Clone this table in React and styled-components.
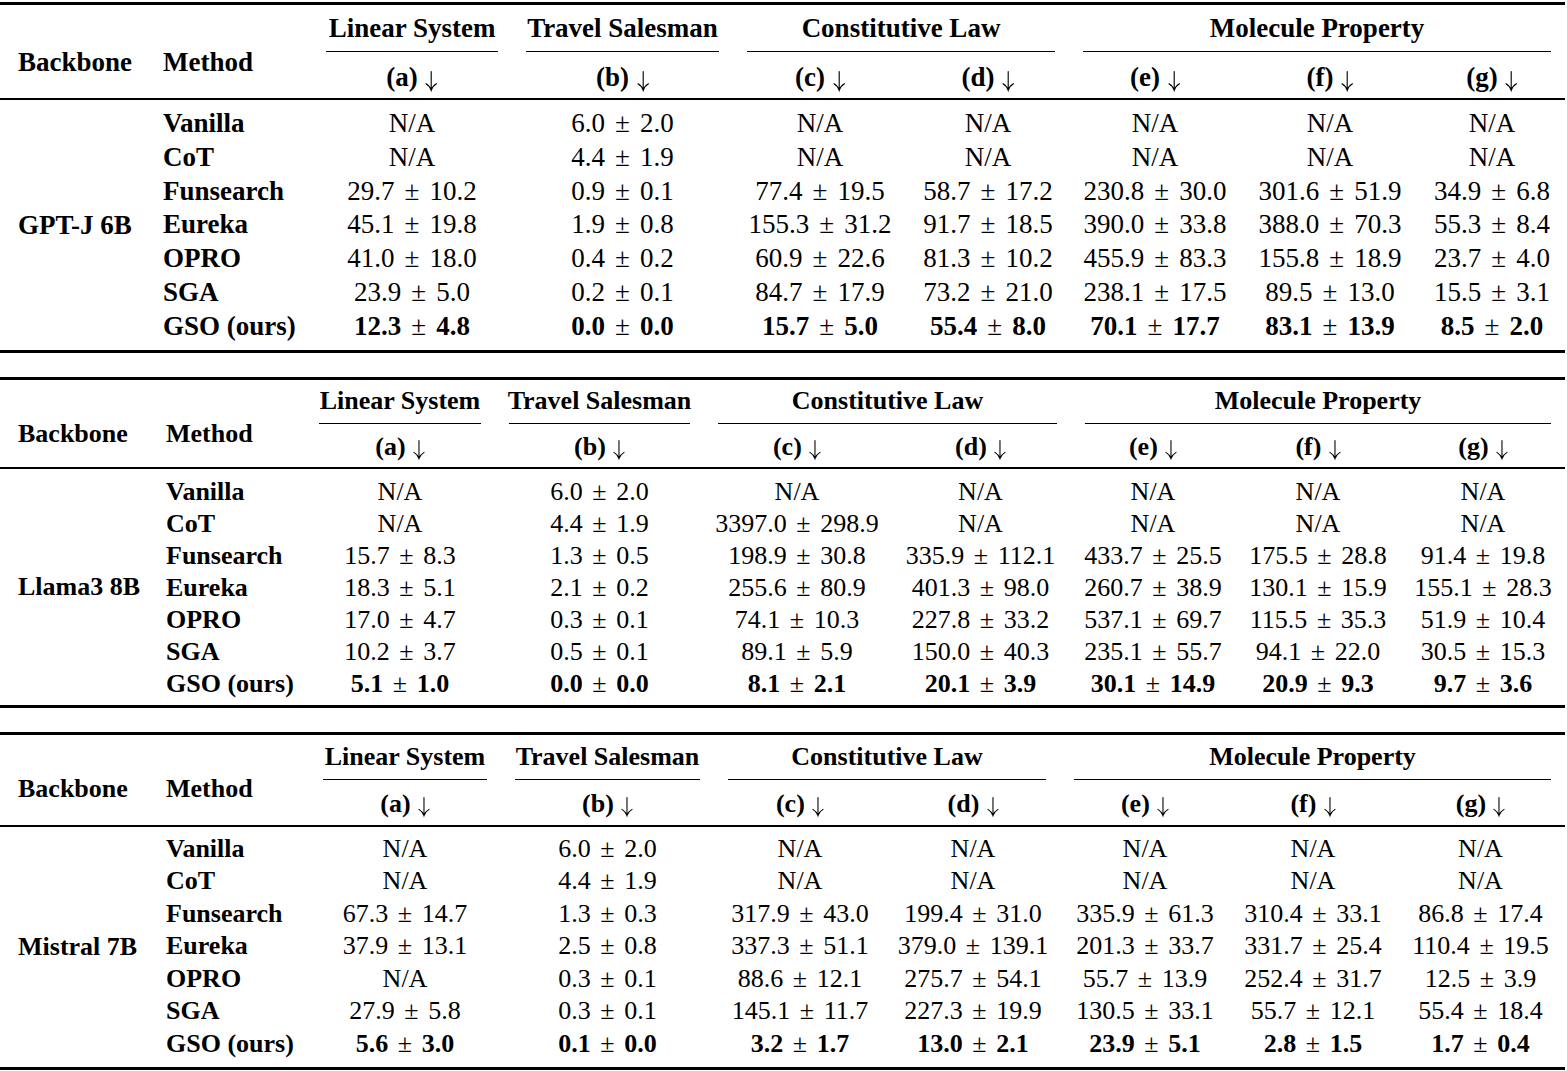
import React from "react";
import styled, { createGlobalStyle } from "styled-components";

const GlobalStyle = createGlobalStyle`
  html, body { margin: 0; padding: 0; background: #fff; }
  body { font-family: "Liberation Serif", "Times New Roman", serif; color: #000; }
`;

const Page = styled.div`
  width: 1565px;
  font-family: "Liberation Serif", "Times New Roman", serif;
  color: #000;
`;

const Table = styled.table`
  width: 1565px;
  table-layout: fixed;
  border-collapse: collapse;
  border-spacing: 0;
  margin-top: ${(p) => p.$mt}px;
  font-size: ${(p) => p.$fs}px;
  border-top: 3px solid #000;
  border-bottom: 3px solid #000;
`;

const Col = styled.col`
  width: ${(p) => p.$w}px;
`;

const Head = styled.thead`
  border-bottom: 2px solid #000;
`;

const CornerHead = styled.th`
  text-align: left;
  vertical-align: middle;
  font-weight: bold;
  white-space: nowrap;
  padding: ${(p) => p.$pt}px 0 0 ${(p) => p.$pl}px;
  line-height: 1.2;
`;

const GroupHead = styled.th`
  padding: 0 14px;
  vertical-align: bottom;
`;

const GroupLabel = styled.div`
  box-sizing: border-box;
  height: ${(p) => p.$h}px;
  display: flex;
  align-items: center;
  justify-content: center;
  border-bottom: 1px solid #000;
  white-space: nowrap;
  font-weight: bold;
`;

const SubHead = styled.th`
  text-align: center;
  vertical-align: middle;
  white-space: nowrap;
  font-weight: bold;
  padding: ${(p) => p.$pt}px 0 0;
  line-height: ${(p) => p.$h - p.$pt}px;
`;

const ArrowSvg = styled.svg`
  display: inline-block;
  width: 0.46em;
  height: 0.72em;
  margin-left: 0.28em;
  vertical-align: -0.16em;
  overflow: visible;
`;

const DataRow = styled.tr`
  & > td {
    padding-top: ${(p) => p.$pt}px;
    padding-bottom: ${(p) => p.$pb}px;
  }
`;

const BackboneCell = styled.td`
  text-align: left;
  vertical-align: middle;
  font-weight: bold;
  white-space: nowrap;
  line-height: 1.2;
  && {
    padding: 0 0 0 18px;
  }
`;

const MethodCell = styled.td`
  text-align: left;
  font-weight: bold;
  white-space: nowrap;
  padding: 0 0 0 15px;
  line-height: ${(p) => p.$lh}px;
`;

const Val = styled.td`
  text-align: center;
  white-space: nowrap;
  padding: 0;
  line-height: ${(p) => p.$lh}px;
  font-weight: ${(p) => (p.$bold ? "bold" : "normal")};
`;

const Pm = styled.span`
  font-weight: normal;
  margin: 0 0.12em;
`;

const METHODS = ["Vanilla", "CoT", "Funsearch", "Eureka", "OPRO", "SGA", "GSO (ours)"];
const SUBS = ["a", "b", "c", "d", "e", "f", "g"];
const GROUPS = [
  ["Linear System", 1],
  ["Travel Salesman", 1],
  ["Constitutive Law", 2],
  ["Molecule Property", 3],
];

const BLOCKS = [
  {
    name: "GPT-J 6B",
    fs: 27,
    row: 33.8,
    mt: 2,
    h1: 47,
    h2: 46,
    h2pt: 4,
    cornerPt: 21,
    dTop: 7,
    dBot: 6,
    cols: [148, 164, 200, 221, 174, 162, 172, 178, 146],
    data: [
      ["N/A", "6.0 ± 2.0", "N/A", "N/A", "N/A", "N/A", "N/A"],
      ["N/A", "4.4 ± 1.9", "N/A", "N/A", "N/A", "N/A", "N/A"],
      ["29.7 ± 10.2", "0.9 ± 0.1", "77.4 ± 19.5", "58.7 ± 17.2", "230.8 ± 30.0", "301.6 ± 51.9", "34.9 ± 6.8"],
      ["45.1 ± 19.8", "1.9 ± 0.8", "155.3 ± 31.2", "91.7 ± 18.5", "390.0 ± 33.8", "388.0 ± 70.3", "55.3 ± 8.4"],
      ["41.0 ± 18.0", "0.4 ± 0.2", "60.9 ± 22.6", "81.3 ± 10.2", "455.9 ± 83.3", "155.8 ± 18.9", "23.7 ± 4.0"],
      ["23.9 ± 5.0", "0.2 ± 0.1", "84.7 ± 17.9", "73.2 ± 21.0", "238.1 ± 17.5", "89.5 ± 13.0", "15.5 ± 3.1"],
      ["12.3 ± 4.8", "0.0 ± 0.0", "15.7 ± 5.0", "55.4 ± 8.0", "70.1 ± 17.7", "83.1 ± 13.9", "8.5 ± 2.0"],
    ],
  },
  {
    name: "Llama3 8B",
    fs: 26,
    row: 32,
    mt: 24,
    h1: 44,
    h2: 43,
    h2pt: 3,
    cornerPt: 21,
    dTop: 7,
    dBot: 5,
    cols: [151, 154, 190, 209, 186, 181, 164, 166, 164],
    data: [
      ["N/A", "6.0 ± 2.0", "N/A", "N/A", "N/A", "N/A", "N/A"],
      ["N/A", "4.4 ± 1.9", "3397.0 ± 298.9", "N/A", "N/A", "N/A", "N/A"],
      ["15.7 ± 8.3", "1.3 ± 0.5", "198.9 ± 30.8", "335.9 ± 112.1", "433.7 ± 25.5", "175.5 ± 28.8", "91.4 ± 19.8"],
      ["18.3 ± 5.1", "2.1 ± 0.2", "255.6 ± 80.9", "401.3 ± 98.0", "260.7 ± 38.9", "130.1 ± 15.9", "155.1 ± 28.3"],
      ["17.0 ± 4.7", "0.3 ± 0.1", "74.1 ± 10.3", "227.8 ± 33.2", "537.1 ± 69.7", "115.5 ± 35.3", "51.9 ± 10.4"],
      ["10.2 ± 3.7", "0.5 ± 0.1", "89.1 ± 5.9", "150.0 ± 40.3", "235.1 ± 55.7", "94.1 ± 22.0", "30.5 ± 15.3"],
      ["5.1 ± 1.0", "0.0 ± 0.0", "8.1 ± 2.1", "20.1 ± 3.9", "30.1 ± 14.9", "20.9 ± 9.3", "9.7 ± 3.6"],
    ],
  },
  {
    name: "Mistral 7B",
    fs: 26,
    row: 32.5,
    mt: 24,
    h1: 45,
    h2: 45,
    h2pt: 2,
    cornerPt: 18,
    dTop: 6,
    dBot: 7,
    cols: [151, 158, 192, 213, 172, 174, 170, 166, 169],
    data: [
      ["N/A", "6.0 ± 2.0", "N/A", "N/A", "N/A", "N/A", "N/A"],
      ["N/A", "4.4 ± 1.9", "N/A", "N/A", "N/A", "N/A", "N/A"],
      ["67.3 ± 14.7", "1.3 ± 0.3", "317.9 ± 43.0", "199.4 ± 31.0", "335.9 ± 61.3", "310.4 ± 33.1", "86.8 ± 17.4"],
      ["37.9 ± 13.1", "2.5 ± 0.8", "337.3 ± 51.1", "379.0 ± 139.1", "201.3 ± 33.7", "331.7 ± 25.4", "110.4 ± 19.5"],
      ["N/A", "0.3 ± 0.1", "88.6 ± 12.1", "275.7 ± 54.1", "55.7 ± 13.9", "252.4 ± 31.7", "12.5 ± 3.9"],
      ["27.9 ± 5.8", "0.3 ± 0.1", "145.1 ± 11.7", "227.3 ± 19.9", "130.5 ± 33.1", "55.7 ± 12.1", "55.4 ± 18.4"],
      ["5.6 ± 3.0", "0.1 ± 0.0", "3.2 ± 1.7", "13.0 ± 2.1", "23.9 ± 5.1", "2.8 ± 1.5", "1.7 ± 0.4"],
    ],
  },
];

function DownArrow() {
  return (
    <ArrowSvg viewBox="0 0 12 20" aria-hidden="true">
      <path
        d="M6 0.5 V19.6 M0.6 13.2 C3.3 14.8 5.1 16.8 6 19.8 C6.9 16.8 8.7 14.8 11.4 13.2"
        fill="none"
        stroke="#000"
        strokeWidth="1.15"
        strokeLinecap="round"
      />
    </ArrowSvg>
  );
}

function Value({ text }) {
  const parts = text.split(" ± ");
  if (parts.length < 2) return text;
  return (
    <>
      {parts[0]} <Pm>±</Pm> {parts[1]}
    </>
  );
}

function ResultBlock({ b }) {
  const last = b.data.length - 1;
  return (
    <Table $mt={b.mt} $fs={b.fs}>
      <colgroup>
        {b.cols.map((w, i) => (
          <Col key={i} $w={w} />
        ))}
      </colgroup>
      <Head>
        <tr>
          <CornerHead rowSpan={2} $pt={b.cornerPt} $pl={18}>
            Backbone
          </CornerHead>
          <CornerHead rowSpan={2} $pt={b.cornerPt} $pl={15}>
            Method
          </CornerHead>
          {GROUPS.map(([label, span]) => (
            <GroupHead key={label} colSpan={span}>
              <GroupLabel $h={b.h1}>{label}</GroupLabel>
            </GroupHead>
          ))}
        </tr>
        <tr>
          {SUBS.map((s) => (
            <SubHead key={s} $h={b.h2} $pt={b.h2pt}>
              ({s})
              <DownArrow />
            </SubHead>
          ))}
        </tr>
      </Head>
      <tbody>
        {b.data.map((row, ri) => (
          <DataRow key={ri} $pt={ri === 0 ? b.dTop : 0} $pb={ri === last ? b.dBot : 0}>
            {ri === 0 && <BackboneCell rowSpan={b.data.length}>{b.name}</BackboneCell>}
            <MethodCell $lh={b.row}>{METHODS[ri]}</MethodCell>
            {row.map((v, ci) => (
              <Val key={ci} $lh={b.row} $bold={ri === last}>
                <Value text={v} />
              </Val>
            ))}
          </DataRow>
        ))}
      </tbody>
    </Table>
  );
}

export default function App() {
  return (
    <Page>
      <GlobalStyle />
      {BLOCKS.map((b) => (
        <ResultBlock key={b.name} b={b} />
      ))}
    </Page>
  );
}
